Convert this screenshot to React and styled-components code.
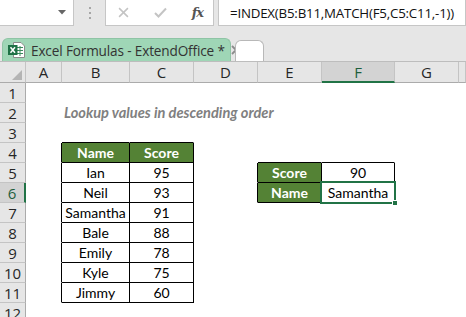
import React from 'react';
import styled, { createGlobalStyle } from 'styled-components';

const Global = createGlobalStyle`
  html, body { margin: 0; padding: 0; background: #e6e6e6; overflow: hidden; }
  #root { width: 466px; height: 317px; }
  * { box-sizing: border-box; }
  svg { flex: none; display: block; }
`;

const Frame = styled.div`
  width: 466px;
  height: 317px;
  display: flex;
  flex-direction: column;
  background: #e6e6e6;
  overflow: hidden;
  font-family: "Open Sans", "Noto Sans", sans-serif;
`;

/* ---------- formula bar ---------- */
const FormulaBar = styled.div`
  height: 26px;
  flex: none;
  display: flex;
  align-items: stretch;
`;

const Box = styled.div`
  background: #fff;
  border: 1px solid #c6c6c6;
  border-top: none;
  display: flex;
  align-items: center;
  width: ${(p) => p.$w || 'auto'};
  flex: ${(p) => (p.$grow ? '1 1 auto' : 'none')};
  margin-left: ${(p) => p.$ml || 0}px;
  min-width: 0;
  overflow: hidden;
`;

const NameBox = styled(Box)`
  justify-content: flex-end;
  padding-right: 7px;
  border-left: none;
`;

const Dots = styled.div`
  width: 31px;
  flex: none;
  display: flex;
  flex-direction: column;
  align-items: center;
  justify-content: center;
  gap: 3px;
`;

const Dot = styled.span`
  width: 2px;
  height: 2px;
  background: #a6a6a6;
`;

const FuncBox = styled(Box)`
  justify-content: space-between;
  padding: 0 10px 0 12px;
`;

const Fx = styled.span`
  font-family: "DejaVu Serif", "Liberation Serif", serif;
  font-style: italic;
  font-weight: bold;
  font-size: 13px;
  color: #555;
  letter-spacing: -1px;
`;

const FormulaText = styled.span`
  font-family: "Open Sans", "Noto Sans", sans-serif;
  font-size: 13.3px;
  color: #111;
  white-space: nowrap;
  padding-left: 11px;
  letter-spacing: -0.2px;
`;

/* ---------- tabs ---------- */
const TabRow = styled.div`
  height: 35px;
  flex: none;
  display: flex;
  align-items: flex-end;
  padding-left: 2px;
  gap: 4px;
`;

const Tab = styled.div`
  width: 229px;
  height: 23px;
  background: ${(p) => (p.$active ? '#9fd6b6' : '#fff')};
  border: 1px solid ${(p) => (p.$active ? '#8fc4a5' : '#b8b8b8')};
  border-bottom: none;
  border-radius: 6px 6px 0 0;
  display: flex;
  align-items: center;
  padding: 0 8px 0 5px;
  gap: 6px;
`;

const NewTab = styled(Tab)`
  width: 29px;
  height: 21px;
`;

const TabTitle = styled.span`
  font-size: 13.6px;
  color: #333;
  white-space: nowrap;
  flex: 1;
  letter-spacing: -0.15px;
`;

/* ---------- sheet ---------- */
const COLS = '26px 36px 68px 64px 64px 64px 73px 64px 1fr';

const Sheet = styled.div`
  flex: 1;
  display: grid;
  grid-template-columns: ${COLS};
  grid-auto-rows: 20px;
  grid-template-rows: 21px;
  background: #fff;
  border-top: 1px solid #bdbdbd;
`;

const ColHead = styled.div`
  background: ${(p) => (p.$sel ? '#d3d3d3' : '#e6e6e6')};
  border-right: 1px solid #c4c4c4;
  border-bottom: ${(p) => (p.$sel ? '2px solid #217346' : '1px solid #ababab')};
  display: flex;
  align-items: center;
  justify-content: center;
  font-size: 15px;
  color: ${(p) => (p.$sel ? '#1e5e3c' : '#262626')};
  position: relative;
`;

const Corner = styled(ColHead)`
  justify-content: flex-end;
  align-items: flex-end;
  padding: 0 3px 2px 0;
`;

const RowHead = styled.div`
  background: ${(p) => (p.$sel ? '#d3d3d3' : '#e6e6e6')};
  border-bottom: 1px solid #c4c4c4;
  border-right: ${(p) => (p.$sel ? '2px solid #217346' : '1px solid #ababab')};
  display: flex;
  align-items: center;
  justify-content: center;
  font-size: 15px;
  color: ${(p) => (p.$sel ? '#1e5e3c' : '#262626')};
`;

const Cell = styled.div`
  position: relative;
  border-right: 1px solid ${(p) => (p.$br ? '#000' : 'transparent')};
  border-bottom: 1px solid ${(p) => (p.$bb ? '#000' : 'transparent')};
  background: ${(p) => (p.$head ? '#548235' : 'transparent')};
  color: ${(p) => (p.$head ? '#fff' : '#000')};
  font-family: "Lato", "Liberation Sans", sans-serif;
  font-weight: ${(p) => (p.$head ? 700 : 400)};
  font-size: 14px;
  display: flex;
  align-items: center;
  justify-content: ${(p) => (p.$left ? 'flex-start' : 'center')};
  padding-left: ${(p) => (p.$left ? '2px' : '0')};
  white-space: nowrap;
  overflow: visible;
`;

const Title = styled.span`
  font-weight: 700;
  font-style: italic;
  font-size: 14.6px;
  color: #808080;
`;

const Selection = styled.div`
  position: absolute;
  top: -2px;
  left: -2px;
  right: -2px;
  bottom: -2px;
  border: 2px solid #217346;
  pointer-events: none;
`;

const Handle = styled.div`
  position: absolute;
  right: -4px;
  bottom: -4px;
  width: 6px;
  height: 6px;
  background: #217346;
  border: 1px solid #fff;
`;

/* ---------- icons ---------- */
const DropArrow = () => (
  <svg width="8" height="5" viewBox="0 0 8 5">
    <path d="M0 0 H8 L4 4.5 Z" fill="#666" />
  </svg>
);

const XIcon = ({ color = '#c4c4c4', size = 11, w = 1.4 }) => (
  <svg width={size} height={size} viewBox="0 0 10 10">
    <path d="M1 1 L9 9 M9 1 L1 9" stroke={color} strokeWidth={w} />
  </svg>
);

const Check = () => (
  <svg width="13" height="11" viewBox="0 0 13 11">
    <path d="M1 6 L4.5 9.5 L12 1.5" stroke="#c4c4c4" strokeWidth="2" fill="none" />
  </svg>
);

const ExcelIcon = () => (
  <svg width="17" height="16" viewBox="0 0 17 16">
    <path d="M5.5 0.5 H13 L16.5 4 V15.5 H5.5 Z" fill="#fff" stroke="#8a8a8a" />
    <path d="M9 5.5 H15 M9 8.5 H15 M9 11.5 H15 M12 4 V14" stroke="#3a8a5c" strokeWidth="1" />
    <rect x="0" y="3" width="9.5" height="10" fill="#1e7145" />
    <path d="M2.5 5.3 L7 10.7 M7 5.3 L2.5 10.7" stroke="#fff" strokeWidth="1.5" />
  </svg>
);

const SelectAll = () => (
  <svg width="10" height="10" viewBox="0 0 10 10">
    <path d="M10 0 V10 H0 Z" fill="#b4b4b4" />
  </svg>
);

/* ---------- data ---------- */
const colLetters = ['A', 'B', 'C', 'D', 'E', 'F', 'G', ''];
const cells = {
  B2: { text: 'Lookup values in descending order', title: true },
  B4: { text: 'Name', head: true },
  C4: { text: 'Score', head: true },
  E5: { text: 'Score', head: true },
  F5: { text: '90' },
  E6: { text: 'Name', head: true },
  F6: { text: 'Samantha', selected: true },
};
const people = [
  ['Ian', 95],
  ['Neil', 93],
  ['Samantha', 91],
  ['Bale', 88],
  ['Emily', 78],
  ['Kyle', 75],
  ['Jimmy', 60],
];
people.forEach(([n, s], i) => {
  cells['B' + (5 + i)] = { text: n };
  cells['C' + (5 + i)] = { text: String(s) };
});

const inTable = (c, r) => {
  if (c >= 1 && c <= 2 && r >= 4 && r <= 11) return true; // B4:C11
  if (c >= 4 && c <= 5 && r >= 5 && r <= 6) return true; // E5:F6
  return false;
};

export default function App() {
  const rows = [];
  for (let r = 1; r <= 12; r++) {
    rows.push(
      <RowHead key={'h' + r} $sel={r === 6}>
        {r}
      </RowHead>
    );
    for (let c = 0; c < 8; c++) {
      const key = colLetters[c] + r;
      const d = cells[key];
      const br = inTable(c, r) || inTable(c + 1, r);
      const bb = inTable(c, r) || inTable(c, r + 1);
      rows.push(
        <Cell key={'c' + c + '-' + r} $br={br} $bb={bb} $head={d && d.head} $left={d && d.title}>
          {d && (d.title ? <Title>{d.text}</Title> : d.text)}
          {d && d.selected && (
            <Selection>
              <Handle />
            </Selection>
          )}
        </Cell>
      );
    }
  }

  return (
    <>
      <Global />
      <Frame>
        <FormulaBar>
          <NameBox $w="74px">
            <DropArrow />
          </NameBox>
          <Dots>
            <Dot />
            <Dot />
            <Dot />
          </Dots>
          <FuncBox $w="109px">
            <XIcon />
            <Check />
            <Fx>fx</Fx>
          </FuncBox>
          <Box $grow $ml={4}>
            <FormulaText>=INDEX(B5:B11,MATCH(F5,C5:C11,-1))</FormulaText>
          </Box>
        </FormulaBar>
        <TabRow>
          <Tab $active>
            <ExcelIcon />
            <TabTitle>Excel Formulas - ExtendOffice *</TabTitle>
            <XIcon color="#8c8c8c" size={10} w={1.8} />
          </Tab>
          <NewTab />
        </TabRow>
        <Sheet>
          <Corner>
            <SelectAll />
          </Corner>
          {colLetters.map((l, i) => (
            <ColHead key={'col' + i} $sel={l === 'F'}>
              {l}
            </ColHead>
          ))}
          {rows}
        </Sheet>
      </Frame>
    </>
  );
}
